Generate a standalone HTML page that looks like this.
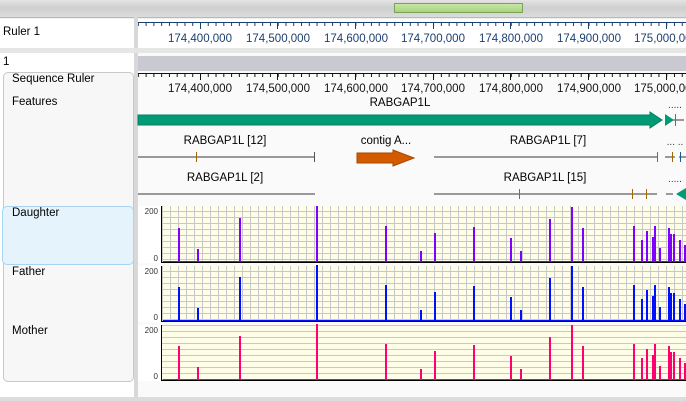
<!DOCTYPE html>
<html><head><style>
body{margin:0;width:686px;height:401px;overflow:hidden;background:#f0f0f0;font-family:"Liberation Sans",sans-serif;font-size:11.5px;color:#000;position:relative}
.a{position:absolute}
</style></head><body>
<div class="a" style="left:0;top:0;width:686px;height:17px;background:linear-gradient(#e4e4e4,#cfcfcf 45%,#dcdcdc);border-bottom:1px solid #b8b8b8"></div>
<div class="a" style="left:394px;top:3px;width:129px;height:10px;background:linear-gradient(#c7e6a5,#a8d47e);border:1px solid #7aa35a;box-sizing:border-box"></div>
<div class="a" style="left:0;top:19px;width:134px;height:29px;background:#fff"></div>
<div class="a" style="left:3px;top:26px">Ruler 1</div>
<div class="a" style="left:138px;top:19px;width:548px;height:29px;background:#fff"></div>
<div class="a" style="left:0;top:53px;width:134px;height:345px;background:#fff"></div>
<div class="a" style="left:3px;top:56px">1</div>
<div class="a" style="left:3px;top:72px;width:129px;height:308px;background:#f7f7f7;border:1px solid #c8c8c8;border-radius:5px"></div>
<div class="a" style="left:2px;top:206px;width:130px;height:57px;background:#e4f3fc;border:1px solid #a8d4f0;border-radius:5px"></div>
<div class="a" style="left:12px;top:73px">Sequence Ruler</div>
<div class="a" style="left:12px;top:96px">Features</div>
<div class="a" style="left:12px;top:207px">Daughter</div>
<div class="a" style="left:12px;top:266px">Father</div>
<div class="a" style="left:12px;top:325px">Mother</div>
<div class="a" style="left:138px;top:53px;width:548px;height:345px;background:#fafafa"></div>
<svg class="a" style="left:0;top:0" width="686" height="401" font-family="Liberation Sans, sans-serif" font-size="11.5" text-anchor="middle">
<defs>
<pattern id="tk" x="200" y="0" width="7.77" height="401" patternUnits="userSpaceOnUse"><rect x="0" y="0" width="1" height="401" fill="#1b3f6e"/></pattern>
<pattern id="tk2" x="200" y="0" width="7.77" height="401" patternUnits="userSpaceOnUse"><rect x="0" y="0" width="1" height="401" fill="#111"/></pattern>
<pattern id="gv" x="170" y="0" width="8" height="401" patternUnits="userSpaceOnUse"><rect x="0" y="0" width="1" height="401" fill="#c8c8c8"/></pattern>
<pattern id="gh" x="0" y="1" width="686" height="6" patternUnits="userSpaceOnUse"><rect x="0" y="0" width="686" height="1" fill="#c8c8c8"/></pattern>
<g id="pk">
<rect x="178" y="-34" width="2" height="34"/><rect x="197" y="-13" width="2" height="13"/><rect x="239" y="-44" width="2" height="44"/><rect x="316" y="-56" width="2" height="56"/><rect x="385" y="-36" width="2" height="36"/><rect x="420" y="-11" width="2" height="11"/><rect x="434" y="-29" width="2" height="29"/><rect x="473" y="-35" width="2" height="35"/><rect x="510" y="-24" width="2" height="24"/><rect x="520" y="-11" width="2" height="11"/><rect x="549" y="-43" width="2" height="43"/><rect x="571" y="-55" width="2" height="55"/><rect x="582" y="-34" width="2" height="34"/><rect x="633" y="-36" width="2" height="36"/><rect x="641" y="-22" width="2" height="22"/><rect x="646" y="-31" width="2" height="31"/><rect x="652" y="-25" width="2" height="25"/><rect x="654" y="-36" width="2" height="36"/><rect x="659" y="-14" width="2" height="14"/><rect x="668" y="-34" width="2" height="34"/><rect x="670" y="-28" width="2" height="28"/><rect x="673" y="-28" width="2" height="28"/><rect x="679" y="-22" width="2" height="22"/><rect x="684" y="-17" width="2" height="17"/>
<rect x="163" y="-1" width="523" height="1"/>
</g>
</defs>
<rect x="134" y="17" width="4" height="384" fill="#d8d8d8"/>
<rect x="0" y="48" width="686" height="5" fill="#e6e6e6"/>
<rect x="0" y="397" width="686" height="4" fill="#dcdcdc"/>
<rect x="138" y="56" width="548" height="15" fill="#c9c9d2"/>
<rect x="138" y="22" width="548" height="1" fill="#1b3f6e"/>
<rect x="138" y="22" width="548" height="4" fill="url(#tk)"/>
<g fill="#1b3f6e"><rect x="200" y="22" width="1" height="7"/><rect x="277" y="22" width="1" height="7"/><rect x="355" y="22" width="1" height="7"/><rect x="433" y="22" width="1" height="7"/><rect x="510" y="22" width="1" height="7"/><rect x="588" y="22" width="1" height="7"/><rect x="666" y="22" width="1" height="7"/>
<text x="200" y="42">174,400,000</text><text x="278" y="42">174,500,000</text><text x="356" y="42">174,600,000</text><text x="433" y="42">174,700,000</text><text x="511" y="42">174,800,000</text><text x="589" y="42">174,900,000</text><text x="666" y="42">175,000,000</text></g>
<rect x="138" y="73" width="548" height="1" fill="#111"/>
<rect x="138" y="73" width="548" height="4" fill="url(#tk2)"/>
<g fill="#111"><rect x="200" y="73" width="1" height="7"/><rect x="277" y="73" width="1" height="7"/><rect x="355" y="73" width="1" height="7"/><rect x="433" y="73" width="1" height="7"/><rect x="510" y="73" width="1" height="7"/><rect x="588" y="73" width="1" height="7"/><rect x="666" y="73" width="1" height="7"/>
<text x="200" y="92">174,400,000</text><text x="278" y="92">174,500,000</text><text x="356" y="92">174,600,000</text><text x="433" y="92">174,700,000</text><text x="511" y="92">174,800,000</text><text x="589" y="92">174,900,000</text><text x="666" y="92">175,000,000</text></g>
<text x="400" y="106">RABGAP1L</text>
<polygon points="138,115 650,115 650,112 662,120 650,128 650,125 138,125" fill="#009b74" stroke="#00805e"/>
<polygon points="665,114 674,120 665,126" fill="#009b74"/>
<rect x="673" y="119" width="11" height="2" fill="#999"/>
<rect x="675" y="114" width="1" height="12" fill="#a06800"/>
<text x="225" y="144">RABGAP1L [12]</text><text x="386" y="144">contig A...</text><text x="548" y="144">RABGAP1L [7]</text>
<rect x="138" y="156" width="177" height="2" fill="#999"/>
<rect x="196" y="152" width="1" height="10" fill="#a06800"/><rect x="314" y="152" width="1" height="10" fill="#555"/>
<polygon points="357,153 393,153 393,150 414,158 393,166 393,163 357,163" fill="#d45a00" stroke="#a84800"/>
<rect x="434" y="156" width="224" height="2" fill="#999"/><rect x="657" y="152" width="1" height="10" fill="#a06800"/>
<rect x="665" y="156" width="10" height="2" fill="#999"/><rect x="672" y="152" width="1" height="10" fill="#a06800"/>
<rect x="679" y="156" width="7" height="2" fill="#999"/><rect x="680" y="152" width="1" height="10" fill="#1a5a8a"/>
<text x="225" y="181">RABGAP1L [2]</text><text x="545" y="181">RABGAP1L [15]</text>
<rect x="138" y="193" width="177" height="2" fill="#999"/>
<rect x="434" y="193" width="223" height="2" fill="#999"/>
<rect x="519" y="189" width="1" height="10" fill="#a06800"/><rect x="632" y="189" width="1" height="10" fill="#a06800"/><rect x="646" y="189" width="1" height="10" fill="#a06800"/>
<rect x="666" y="193" width="7" height="2" fill="#999"/>
<polygon points="686,188 676,194 686,200" fill="#009b74"/>
<g font-size="10" fill="#333"><text x="675" y="108">.....</text><text x="675" y="145">... ..</text><text x="675" y="182">.....</text></g>
<rect x="138" y="206" width="24" height="57" fill="#fff"/><rect x="162" y="206" width="524" height="57" fill="#fdfde8"/>
<rect x="162" y="206" width="524" height="56" fill="url(#gh)"/><rect x="162" y="206" width="524" height="56" fill="url(#gv)"/>
<rect x="138" y="266" width="24" height="56" fill="#fff"/><rect x="162" y="266" width="524" height="56" fill="#fdfde8"/>
<rect x="162" y="266" width="524" height="55" fill="url(#gh)"/><rect x="162" y="266" width="524" height="55" fill="url(#gv)"/>
<rect x="138" y="325" width="24" height="56" fill="#fff"/><rect x="162" y="325" width="524" height="56" fill="#fdfde8"/>
<rect x="162" y="325" width="524" height="55" fill="url(#gh)"/>
<g font-size="8" fill="#333" text-anchor="end"><text x="158" y="214">200</text><text x="158" y="261">0</text><text x="158" y="274">200</text><text x="158" y="320">0</text><text x="158" y="333">200</text><text x="158" y="379">0</text></g>
<g fill="#000"><rect x="161" y="206" width="1" height="57"/><rect x="161" y="266" width="1" height="56"/><rect x="161" y="325" width="1" height="56"/>
<rect x="162" y="262" width="524" height="1"/><rect x="162" y="321" width="524" height="1"/><rect x="162" y="380" width="524" height="1"/></g>
<use href="#pk" y="262" fill="#8000ff"/>
<use href="#pk" y="321" fill="#0010ff"/>
<use href="#pk" y="380" fill="#ff0070"/>
</svg>
</body></html>
